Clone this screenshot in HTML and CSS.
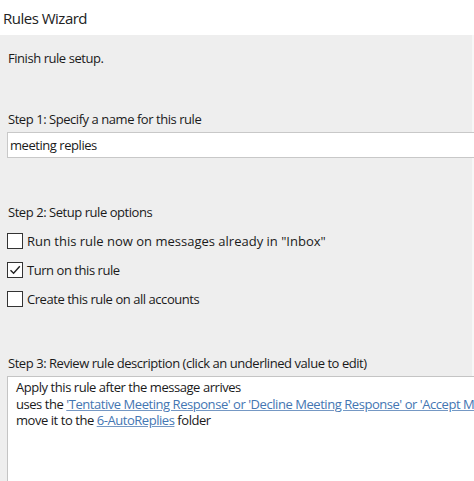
FILE: index.html
```html
<!DOCTYPE html>
<html>
<head>
<meta charset="utf-8">
<link rel="stylesheet" href="styles.css">
</head>
<body>
<div class="header"><span class="title">Rules Wizard</span></div>
<div class="panel">
  <div class="intro">Finish rule setup.</div>
  <div class="label step1">Step 1: Specify a name for this rule</div>
  <div class="input">meeting replies</div>
  <div class="label step2">Step 2: Setup rule options</div>
  <div class="options">
    <div class="option"><span class="box"></span><span class="wide">Run this rule now on messages already in "Inbox"</span></div>
    <div class="option"><span class="box"><svg width="14" height="14" viewBox="0 0 14 14"><path d="M2.5 7.2 L5.6 10.3 L11.8 3.2" fill="none" stroke="#222" stroke-width="1.4"/></svg></span><span>Turn on this rule</span></div>
    <div class="option"><span class="box"></span><span>Create this rule on all accounts</span></div>
  </div>
  <div class="label step3">Step 3: Review rule description (click an underlined value to edit)</div>
  <div class="desc">
    <div>Apply this rule after the message arrives</div>
    <div>uses the <span class="link">'Tentative Meeting Response' or 'Decline Meeting Response' or 'Accept Meeting Response'</span> form</div>
    <div>move it to the <span class="link">6-AutoReplies</span> folder</div>
  </div>
</div>
</body>
</html>
```
FILE: styles.css
```css
html, body {
  margin: 0;
  padding: 0;
  overflow: hidden;
  background: #f7f7f7;
}
body {
  font-family: "Open Sans", "Noto Sans", sans-serif;
  font-size: 13px;
  letter-spacing: -0.45px;
  color: #1a1a1a;
  width: 474px;
  height: 481px;
}
.header {
  height: 35px;
  background: #ffffff;
  display: flex;
  align-items: center;
  padding-left: 3px;
}
.title {
  font-size: 15px;
  letter-spacing: -0.5px;
  color: #222;
  margin-top: 1px;
}
.panel {
  width: 472px;
  height: 446px;
  background: #eeeeee;
  display: flex;
  flex-direction: column;
  padding-top: 14px;
  box-sizing: border-box;
  white-space: nowrap;
}
.intro, .label {
  line-height: 18px;
  height: 18px;
  padding-left: 8px;
}
.step1 { margin-top: 43px; }
.input {
  margin-top: 4px;
  margin-left: 7px;
  width: 500px;
  height: 26px;
  box-sizing: border-box;
  border: 1px solid #c8c8c8;
  background: #ffffff;
  padding-left: 2px;
  line-height: 24px;
}
.step2 { margin-top: 45px; }
.options {
  margin-top: 5px;
  display: flex;
  flex-direction: column;
}
.option {
  height: 29px;
  display: flex;
  align-items: center;
  gap: 4px;
  padding-left: 7px;
}
.wide {
  letter-spacing: 0;
}
.box {
  width: 16px;
  height: 16px;
  box-sizing: border-box;
  border: 1px solid #333;
  background: #ffffff;
  display: flex;
  align-items: center;
  justify-content: center;
}
.step3 { margin-top: 41px; }
.desc {
  margin-top: 4px;
  margin-left: 7px;
  width: 520px;
  flex: 1;
  background: #ffffff;
  border: 1px solid #c4c4c4;
  border-bottom: none;
  padding: 2px 0 0 8px;
  line-height: 16.5px;
}
.link {
  color: #4476b2;
  text-decoration: underline;
  text-decoration-color: #7598c4;
}
```
